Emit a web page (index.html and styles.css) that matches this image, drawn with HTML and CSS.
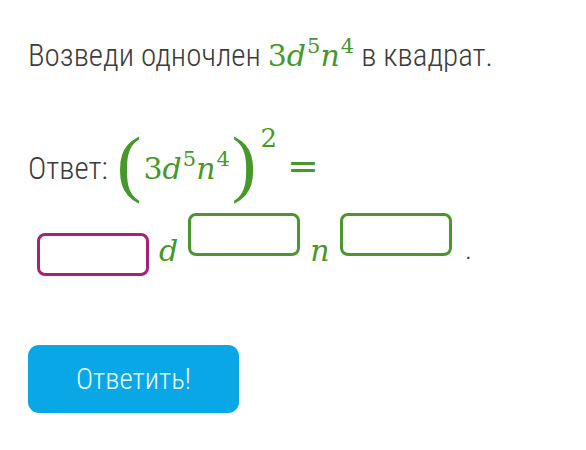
FILE: index.html
```html
<!DOCTYPE html>
<html lang="ru">
<head>
<meta charset="utf-8">
<link rel="stylesheet" href="styles.css">
</head>
<body>
<div class="page">
  <p class="task">Возведи одночлен <span class="m"><span class="num">3</span><i>d</i><sup>5</sup><i>n</i><sup>4</sup></span> в квадрат.</p>
  <p class="answer">Ответ: <span class="m"><span class="paren">(</span><span class="num">3</span><i>d</i><sup>5</sup><i>n</i><sup>4</sup><span class="paren">)</span><sup class="sq">2</sup><span class="eq">=</span></span></p>
  <div class="inputs">
    <span class="box box-pink"></span>
    <i class="var">d</i>
    <span class="box box-green up"></span>
    <i class="var">n</i>
    <span class="box box-green up"></span>
    <span class="dot">.</span>
  </div>
  <button class="btn">Ответить!</button>
</div>
</body>
</html>
```
FILE: styles.css
```css
html, body { margin: 0; padding: 0; background: #fff; }
body { font-family: Roboto, "Noto Sans", sans-serif; color: #3c3c3c; }
.page { padding: 26px 0 0 28px; }
.task { margin: 0; font-size: 31px; font-weight: 300; font-stretch: 85%; line-height: 60px; }
.m { font-family: "DejaVu Serif", "Liberation Serif", serif; color: #45992a; font-size: 30px; font-stretch: 100%; }
.m i { font-style: italic; }
.m sup { font-size: 21px; vertical-align: 0.62em; line-height: 0; margin-left: 1px; }
.num { font-weight: 400; }
.answer { margin: 45px 0 0 0; font-size: 31px; font-weight: 300; font-stretch: 85%; line-height: 70px; }
.paren { font-family: "Liberation Serif", serif; font-size: 74px; font-weight: 300; vertical-align: -9px; line-height: 0; margin: 0 2px; }
.m sup.sq { font-size: 26px; vertical-align: 1.25em; margin-left: 2px; }
.eq { margin-left: 10px; font-size: 38px; }
.inputs { display: flex; align-items: flex-start; margin-top: 9px; padding-left: 9px; height: 70px; }
.box { display: block; width: 106px; height: 37px; border-radius: 8px; box-sizing: content-box; }
.box-pink { border: 3px solid #a5227a; margin-top: 20px; }
.box-green { border: 3px solid #4a982a; }
.var { font-family: "DejaVu Serif", "Liberation Serif", serif; color: #45992a; font-size: 30px; margin: 20px 10px 0 10px; }
.dot { color: #444; font-size: 22px; margin: 26px 0 0 14px; }
.btn { margin-top: 62px; width: 211px; height: 68px; border: 0; border-radius: 11px; background: #0aa7e7; color: #e6faff; font-family: Roboto, sans-serif; font-weight: 300; font-stretch: 85%; font-size: 29px; }
```
